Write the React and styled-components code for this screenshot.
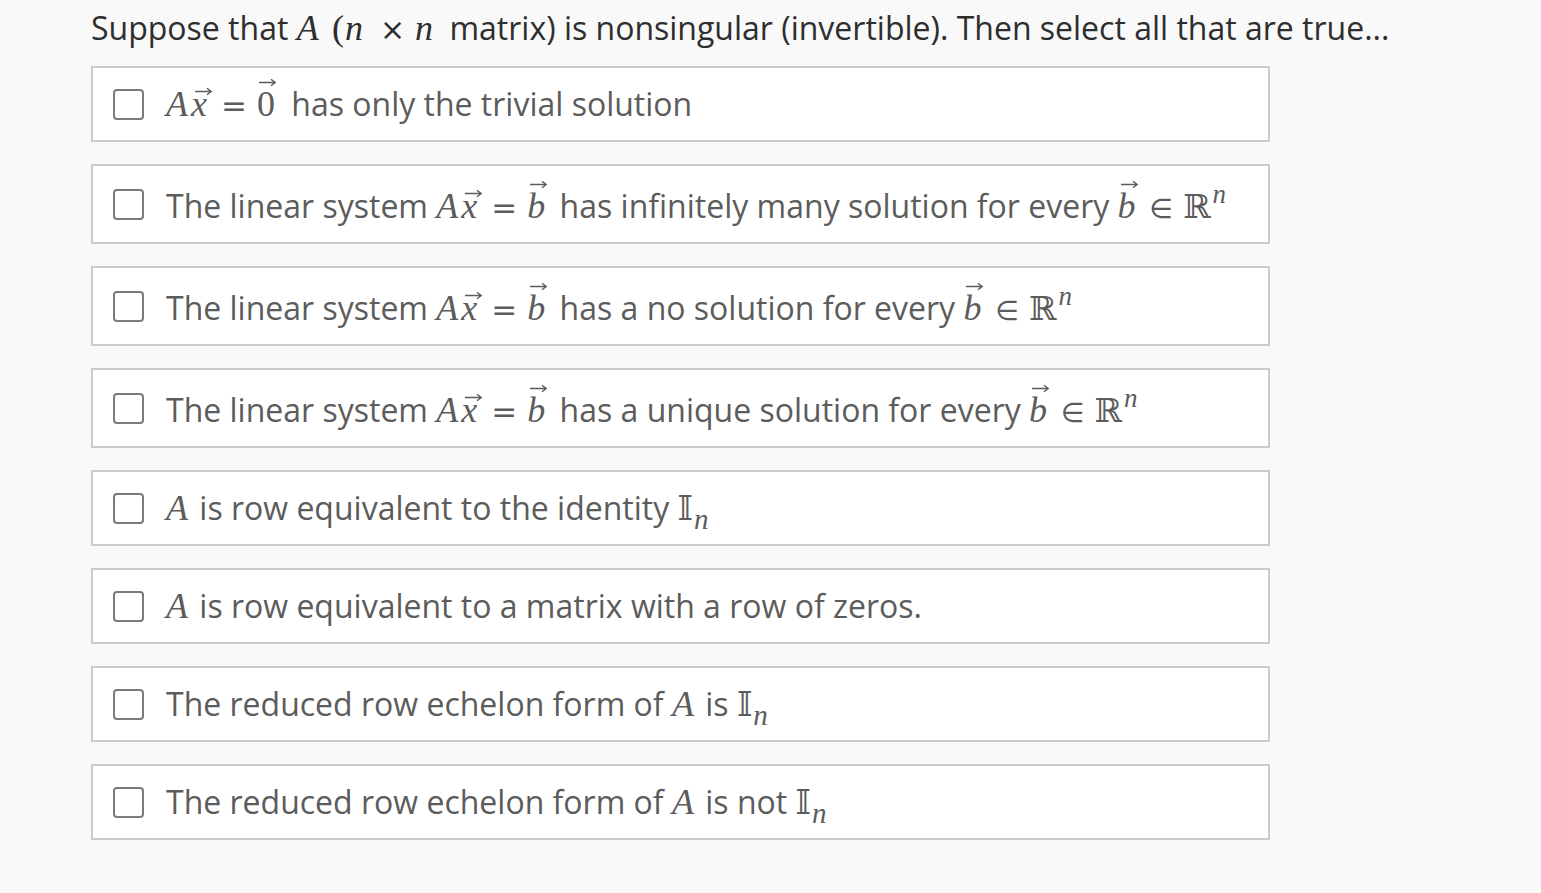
import React from 'react'
import styled, { createGlobalStyle } from 'styled-components'

const Global = createGlobalStyle`
  html, body { margin: 0; background: #f9f9f9; }
  body { font-family: "Open Sans", "Noto Sans", sans-serif; }
`

const Page = styled.div`
  padding: 6px 0 40px 91px;
  width: 1179px;
`

const Title = styled.div`
  font-size: 32px;
  line-height: 44px;
  color: #2e2e2e;
  white-space: nowrap;
  margin-bottom: 16px;
`

const List = styled.div`
  display: flex;
  flex-direction: column;
  gap: 22px;
`

const Option = styled.label`
  display: flex;
  align-items: center;
  gap: 22px;
  height: ${p => (p.$tall ? '76px' : '72px')};
  padding: 0 20px;
  background: #fff;
  border: 2px solid #cbcbcb;
  cursor: pointer;
`

const Box = styled.span`
  flex: none;
  width: 27px;
  height: 27px;
  border: 2px solid #7a7a7a;
  border-radius: 4px;
  background: #fff;
`

const Text = styled.span`
  font-size: 32px;
  line-height: 40px;
  color: #5c5c5c;
  white-space: nowrap;
  margin-top: ${p => (p.$tall ? '4px' : '0')};
`

const M = styled.span`
  font-family: "Liberation Serif", "DejaVu Serif", serif;
  font-style: ${p => (p.$up ? 'normal' : 'italic')};
  font-size: 36px;
  line-height: 1;
  padding-right: ${p => p.$pad ?? 3}px;
`

const Rel = styled.span`
  font-family: "DejaVu Sans", sans-serif;
  font-size: ${p => p.$size || 31}px;
  line-height: 1;
  padding: 0 ${p => p.$gap ?? 10}px;
`

const VecWrap = styled.span`
  position: relative;
  display: inline-block;
  line-height: 1;
  font-family: "Liberation Serif", "DejaVu Serif", serif;
  font-style: ${p => (p.$up ? 'normal' : 'italic')};
  font-size: 36px;
  padding-right: ${p => p.$pad ?? 4}px;
`

const ArrowSvg = styled.svg`
  position: absolute;
  left: ${p => p.$left}px;
  top: ${p => p.$top}px;
  width: 17px;
  height: 8px;
  overflow: visible;
`

const Sup = styled.sup`
  font-family: "Liberation Serif", serif;
  font-style: italic;
  font-size: 27px;
  vertical-align: 0.55em;
  line-height: 0;
  padding-left: 2px;
`

const Sub = styled.sub`
  font-family: "Liberation Serif", serif;
  font-style: italic;
  font-size: 29px;
  vertical-align: -0.3em;
  line-height: 0;
  padding-left: 1px;
`

const Bb = styled.span`
  font-family: "DejaVu Serif", "DejaVu Sans", serif;
  font-size: 33px;
  line-height: 1;
`

const Vec = ({ children, up, left = 2, top = 0, pad }) => (
  <VecWrap $up={up} $pad={pad}>
    {children}
    <ArrowSvg $left={left} $top={top} viewBox="0 0 17 8">
      <path d="M0 4.5H16M12 1.2L16.2 4.5L12 7.8" fill="none" stroke="currentColor" strokeWidth="1.4" />
    </ArrowSvg>
  </VecWrap>
)

const Axb = () => (
  <>
    <M>A</M>
    <Vec left={4} top={1}>x</Vec>
    <Rel>=</Rel>
    <Vec left={3} top={-8} pad={6}>b</Vec>
  </>
)

const Rn = () => (
  <>
    <Vec left={3} top={-8}>b</Vec>
    <Rel $size={27} $gap={10}>∈</Rel>
    <Bb>ℝ</Bb>
    <Sup>n</Sup>
  </>
)

const In = () => (
  <>
    <Bb>𝕀</Bb>
    <Sub>n</Sub>
  </>
)

const options = [
  {
    content: (
      <>
        <M>A</M>
        <Vec left={4} top={1}>x</Vec>
        <Rel>=</Rel>
        <Vec up left={2} top={-8} pad={8}>0</Vec> has only the trivial solution
      </>
    ),
  },
  {
    tall: true,
    content: (
      <>
        The linear system <Axb /> has infinitely many solution for every <Rn />
      </>
    ),
  },
  {
    tall: true,
    content: (
      <>
        The linear system <Axb /> has a no solution for every <Rn />
      </>
    ),
  },
  {
    tall: true,
    content: (
      <>
        The linear system <Axb /> has a unique solution for every <Rn />
      </>
    ),
  },
  {
    content: (
      <>
        <M>A</M> is row equivalent to the identity <In />
      </>
    ),
  },
  {
    content: (
      <>
        <M>A</M> is row equivalent to a matrix with a row of zeros.
      </>
    ),
  },
  {
    content: (
      <>
        The reduced row echelon form of <M>A</M> is <In />
      </>
    ),
  },
  {
    content: (
      <>
        The reduced row echelon form of <M>A</M> is not <In />
      </>
    ),
  },
]

export default function App() {
  return (
    <Page>
      <Global />
      <Title>
        Suppose that <M $pad={5}>A</M> <M $up $pad={1}>(</M><M $pad={7}>n</M><Rel $size={30} $gap={10}>×</Rel><M $pad={8}>n</M> matrix) is nonsingular (invertible). Then select all that are true...
      </Title>
      <List>
        {options.map((o, i) => (
          <Option key={i} $tall={o.tall}>
            <Box />
            <Text $tall={o.tall}>{o.content}</Text>
          </Option>
        ))}
      </List>
    </Page>
  )
}
